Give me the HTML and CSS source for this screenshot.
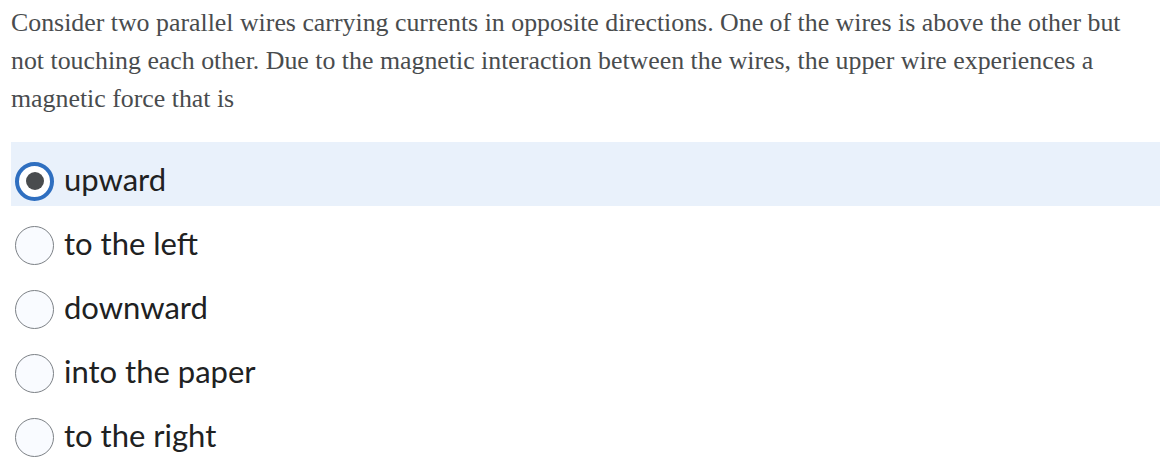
FILE: index.html
```html
<!DOCTYPE html>
<html lang="en">
<head>
<meta charset="utf-8">
<link rel="stylesheet" href="styles.css">
</head>
<body>
<div class="question">
  <p class="prompt">Consider two parallel wires carrying currents in opposite directions. One of the wires is above the other but not touching each other. Due to the magnetic interaction between the wires, the upper wire experiences a magnetic force that is</p>
  <div class="options">
    <label class="option selected"><span class="radio checked"></span><span class="label">upward</span></label>
    <label class="option"><span class="radio"></span><span class="label">to the left</span></label>
    <label class="option"><span class="radio"></span><span class="label">downward</span></label>
    <label class="option"><span class="radio"></span><span class="label">into the paper</span></label>
    <label class="option"><span class="radio"></span><span class="label">to the right</span></label>
  </div>
</div>
</body>
</html>
```
FILE: styles.css
```css
html, body {
  margin: 0;
  padding: 0;
  background: #ffffff;
}
.question {
  padding: 4px 0 0 11px;
}
.prompt {
  max-width: 1128px;
  margin: 0 0 24px 0;
  font-family: "Liberation Serif", "Times New Roman", serif;
  font-size: 25.85px;
  line-height: 38px;
  color: #494c4e;
}
.options {
  display: flex;
  flex-direction: column;
}
.option {
  box-sizing: border-box;
  display: flex;
  align-items: center;
  height: 64px;
  padding: 14px 0 0 4px;
  gap: 10px;
}
.option.selected {
  background: #e9f1fb;
}
.radio {
  box-sizing: border-box;
  width: 39px;
  height: 39px;
  border-radius: 50%;
  border: 1.5px solid #7c8186;
  background: #f9fbff;
  flex: none;
  display: flex;
  align-items: center;
  justify-content: center;
}
.radio.checked {
  border: 4px solid #2f6fc0;
  background: #ffffff;
}
.radio.checked::after {
  content: "";
  width: 18px;
  height: 18px;
  border-radius: 50%;
  background: #494c4e;
}
.label {
  font-family: Lato, "Noto Sans", sans-serif;
  font-size: 31px;
  color: #202122;
  line-height: 1;
  margin-bottom: 4px;
}
```
